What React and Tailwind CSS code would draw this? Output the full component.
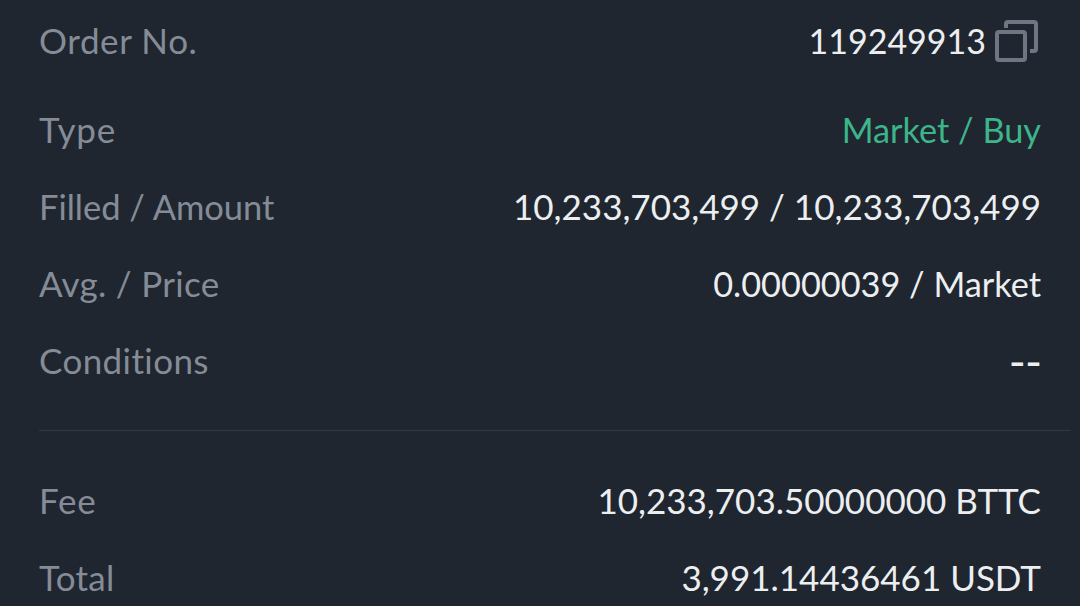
const rows = [
  { label: "Type", value: "Market / Buy", valueClass: "text-[#3db58a] text-[34.3px]", labelClass: "tracking-[0.8px]" },
  { label: "Filled / Amount", value: "10,233,703,499 / 10,233,703,499", valueClass: "text-[#eceef0]", labelClass: "text-[34.5px]" },
  { label: "Avg. / Price", value: "0.00000039 / Market", valueClass: "text-[#eceef0] text-[34.3px]", labelClass: "tracking-[0.3px]" },
  { label: "Conditions", value: "--", valueClass: "text-[#eceef0] text-[46px] tracking-[-1px]", labelClass: "tracking-[0.4px]" },
];

function CopyIcon() {
  return (
    <svg width="43" height="42" viewBox="0 0 43 42" fill="none" stroke="#6f7582" strokeWidth="4" className="ml-[9px] mr-[3px]">
      <rect x="2" y="12" width="28" height="28" rx="2" />
      <path d="M11 8V4a2 2 0 0 1 2-2h26a2 2 0 0 1 2 2v25a2 2 0 0 1-2 2h-4" />
    </svg>
  );
}

function Label({ className, children }) {
  return <span className={`text-[#858c97] ${className}`}>{children}</span>;
}

export default function App() {
  return (
    <div className="w-[1080px] h-[606px] overflow-hidden bg-[#1f2630] font-['Lato',sans-serif] text-[35px] px-[39px]">
      <div className="h-[81px] mb-[10px] flex items-center justify-between">
        <Label className="tracking-[0.6px]">Order No.</Label>
        <div className="flex items-center text-[#eceef0] text-[34px]">
          <span>119249913</span>
          <CopyIcon />
        </div>
      </div>
      {rows.map((r) => (
        <div key={r.label} className="h-[77px] flex items-center justify-between">
          <Label className={r.labelClass}>{r.label}</Label>
          <span className={r.valueClass}>{r.value}</span>
        </div>
      ))}
      <div className="border-t border-[#323843] mt-[31px] mr-[-30px]" />
      <div className="h-[77px] mt-[31px] flex items-center justify-between">
        <Label className="tracking-[0.8px]">Fee</Label>
        <span className="text-[#eceef0]">10,233,703.50000000 BTTC</span>
      </div>
      <div className="h-[77px] flex items-center justify-between">
        <Label className="tracking-[0.3px]">Total</Label>
        <span className="text-[#eceef0]">3,991.14436461 USDT</span>
      </div>
    </div>
  );
}
